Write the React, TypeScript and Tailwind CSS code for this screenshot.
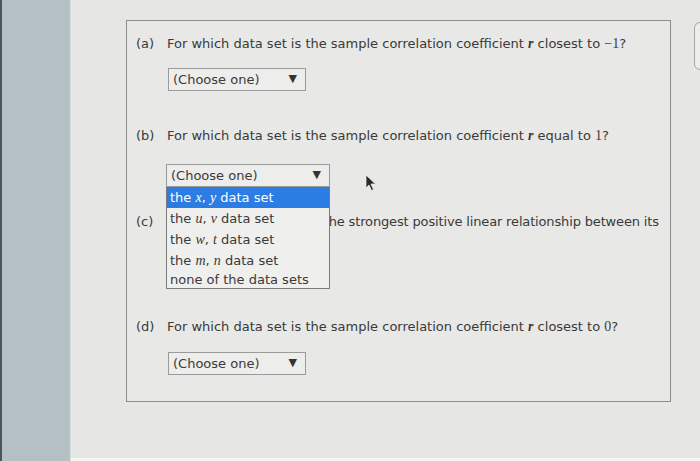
import { ReactNode } from 'react';

const serif = "font-['Liberation_Serif',serif]";

function V({ children }: { children: ReactNode }) {
  return <span className={`${serif} italic text-[14px]`}>{children}</span>;
}

function ChooseOne({ width }: { width: string }) {
  return (
    <div className={`flex h-[23px] ${width} items-center justify-between border border-[#9a9a9a] bg-[#ededeb] pl-[4px] pr-[8px]`}>
      <span>(Choose one)</span>
      <span className="text-[11px] text-[#333]">▼</span>
    </div>
  );
}

function Question({ label, children, tight = false }: { label: string; children: ReactNode; tight?: boolean }) {
  return (
    <div className="flex leading-[20px]">
      <span className="w-[31px] shrink-0">{label}</span>
      <p className={`w-[495px] ${tight ? 'tracking-[-0.15px]' : ''}`}>{children}</p>
    </div>
  );
}

const options: { key: string; node: ReactNode }[] = [
  { key: 'xy', node: <>the <V>x</V>, <V>y</V> data set</> },
  { key: 'uv', node: <>the <V>u</V>, <V>v</V> data set</> },
  { key: 'wt', node: <>the <V>w</V>, <V>t</V> data set</> },
  { key: 'mn', node: <>the <V>m</V>, <V>n</V> data set</> },
];

export default function App() {
  return (
    <div className="flex h-[461px] w-[700px] overflow-hidden bg-[#e6e6e4] font-['DejaVu_Sans',sans-serif] text-[13px] text-[#3a3a3a]">
      <div className="w-[2px] shrink-0 bg-[#4b555a]" />
      <div className="w-[69px] shrink-0 border-r border-[#d9dddd] bg-[#b5c0c4]" />

      <div className="flex flex-1 flex-col">
        <div className="flex flex-1 pl-[55px] pt-[20px]">
          <div className="relative h-[382px] w-[545px] shrink-0 border border-[#8c8c8c] bg-[#e8e8e6] pl-[9px] pt-[13px]">
            {/* (a) */}
            <Question label="(a)">
              For which data set is the sample correlation coefficient <span className={`${serif} font-bold italic text-[14px]`}>r</span> closest to <span className={`${serif} text-[14px]`}>−1</span>?
            </Question>
            <div className="mt-[14px] ml-[32px]">
              <ChooseOne width="w-[138px]" />
            </div>

            {/* (b) */}
            <div className="mt-[35px]">
              <Question label="(b)">
                For which data set is the sample correlation coefficient <span className={`${serif} font-bold italic text-[14px]`}>r</span> equal to <span className={`${serif} text-[14px]`}>1</span>?
              </Question>
            </div>
            <div className="relative z-10 mt-[18px] ml-[30px] w-[164px]">
              <ChooseOne width="w-[164px]" />
              <ul className="absolute left-0 top-full w-[164px] border border-t-0 border-[#7a7a7a] bg-[#efefed]">
                {options.map((o, i) => (
                  <li
                    key={o.key}
                    className={`flex h-[21px] items-center pl-[3px] ${i === 0 ? 'bg-[#2b7de3] text-white' : ''}`}
                  >
                    <span>{o.node}</span>
                  </li>
                ))}
                <li className="flex h-[17px] items-center pl-[3px] leading-none">none of the data sets</li>
              </ul>
            </div>

            {/* (c) — mostly hidden behind the open list */}
            <div className="mt-[25px]">
              <Question label="(c)" tight>
                <span className="tracking-[-0.7px]">For which data set is there t</span>he strongest positive linear relationship between its two variables?
              </Question>
            </div>
            <div className="mt-[14px] ml-[32px]">
              <ChooseOne width="w-[138px]" />
            </div>

            {/* (d) */}
            <div className="mt-[28px]">
              <Question label="(d)">
                For which data set is the sample correlation coefficient <span className={`${serif} font-bold italic text-[14px]`}>r</span> closest to <span className={`${serif} text-[14px]`}>0</span>?
              </Question>
            </div>
            <div className="mt-[15px] ml-[32px]">
              <ChooseOne width="w-[138px]" />
            </div>

            {/* mouse pointer */}
            <svg className="absolute left-[238px] top-[153px]" width="12" height="18" viewBox="0 0 12 18">
              <path d="M1 1 L1 14 L4 11 L6.5 16.5 L8.5 15.5 L6 10 L10.5 10 Z" fill="#2a2a2a" stroke="#eaeaea" strokeWidth="0.8" />
            </svg>
          </div>
          <div className="ml-[23px] mt-[2px] h-[48px] w-[20px] shrink-0 rounded-md border border-[#a5a5a5] bg-[#ededeb]" />
        </div>
        <div className="h-[3px] bg-[#f4f4f2]" />
      </div>
    </div>
  );
}
